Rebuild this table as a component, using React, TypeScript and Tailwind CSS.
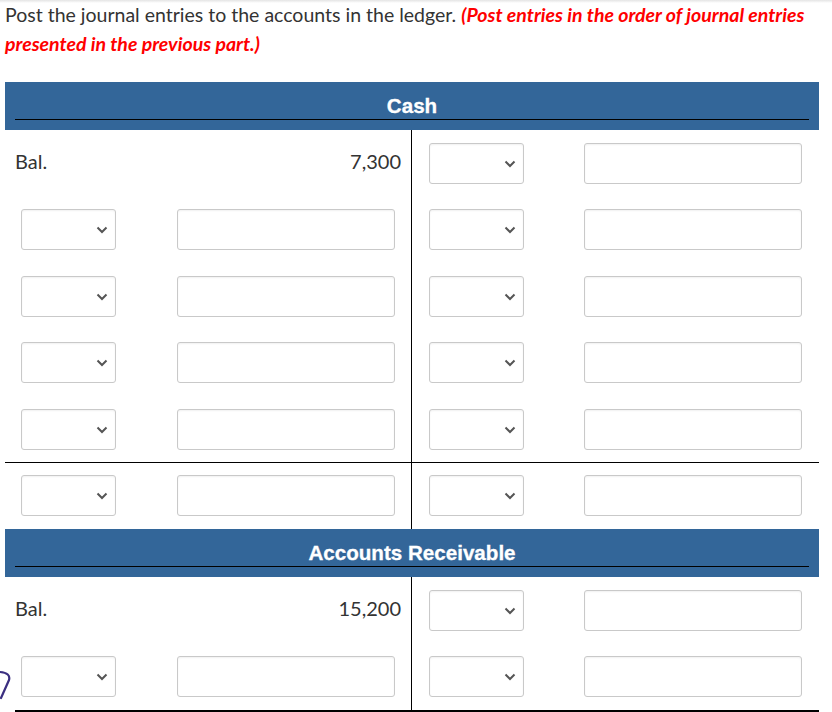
import React from 'react';

const rowHeights = ['h-[66px]', 'h-[67px]', 'h-[66px]', 'h-[67px]', 'h-[66px]'];

function Chevron() {
  return (
    <svg width="12" height="8" viewBox="0 0 12 8" className="absolute right-[7px] top-1/2 -translate-y-1/2">
      <polyline points="1.5,1.5 6,6 10.5,1.5" fill="none" stroke="#555" strokeWidth="2" />
    </svg>
  );
}

function SelectBox() {
  return (
    <div className="relative w-[95px] h-[41px] rounded-[3px] border border-[#c9c9c9] bg-white shadow-[inset_0_1px_2px_rgba(0,0,0,0.06)]">
      <Chevron />
    </div>
  );
}

function TextBox() {
  return <div className="w-[218px] h-[41px] rounded-[3px] border border-[#c9c9c9] bg-white shadow-[inset_0_1px_2px_rgba(0,0,0,0.06)]" />;
}

function EntryCell({ side }: { side: 'left' | 'right' }) {
  return (
    <div className={side === 'left' ? 'flex pl-[16px] gap-[61px]' : 'flex pl-[17px] gap-[60px]'}>
      <SelectBox />
      <TextBox />
    </div>
  );
}

function Header({ title }: { title: string }) {
  return (
    <div className="h-[48px] bg-[#336699] px-[10px]">
      <div className="h-[38px] pt-[11px] border-b border-black text-center text-white font-bold text-[20.6px] leading-[25px] font-['Liberation_Sans',Arial,sans-serif] [-webkit-text-stroke:0.3px_white]">
        {title}
      </div>
    </div>
  );
}

function BalRow({ amount, h }: { amount: string; h: string }) {
  return (
    <div className={`flex ${h}`}>
      <div className="w-[406px] flex items-start justify-between px-[10px] pt-[19px] text-[20px] leading-[24px] text-[#333]">
        <span>Bal.</span>
        <span>{amount}</span>
      </div>
      <div className="w-px bg-black" />
      <div className="flex-1 pt-[13px]">
        <EntryCell side="right" />
      </div>
    </div>
  );
}

function EntryRow({ h, pt }: { h: string; pt: string }) {
  return (
    <div className={`flex ${h}`}>
      <div className={`w-[406px] ${pt}`}>
        <EntryCell side="left" />
      </div>
      <div className="w-px bg-black" />
      <div className={`flex-1 ${pt}`}>
        <EntryCell side="right" />
      </div>
    </div>
  );
}

export default function App() {
  return (
    <div className="relative w-[832px] h-[712px] overflow-hidden bg-white font-['Lato','Open_Sans',sans-serif]">
      <div className="absolute inset-x-0 top-0 h-[3px] bg-gradient-to-b from-[#e4e4e4] to-white" />
      <div className="w-[819px] pl-[5px]">
        <p className="pt-[0px] text-[19.5px] leading-[29px] text-[#333]">
          Post the journal entries to the accounts in the ledger.{' '}
          <span className="font-bold italic text-[#ff0000]">
            (Post entries in the order of journal entries presented in the previous part.)
          </span>
        </p>

        <div className="mt-[24px]">
          <Header title="Cash" />
          <BalRow amount="7,300" h="h-[66px]" />
          {rowHeights.slice(1).map((h, i) => (
            <EntryRow key={i} h={h} pt="pt-[13px]" />
          ))}
          <div className="h-px bg-black" />
          <EntryRow h="h-[66px]" pt="pt-[12px]" />

          <Header title="Accounts Receivable" />
          <BalRow amount="15,200" h="h-[66px]" />
          <EntryRow h="h-[67px]" pt="pt-[13px]" />
          <div className="flex">
            <div className="w-[10px]" />
            <div className="flex-1 h-[2px] bg-black" />
          </div>
          <div className="flex h-[10px]">
            <div className="w-[406px]" />
            <div className="w-px bg-black" />
          </div>
        </div>
      </div>
      <svg width="14" height="34" viewBox="0 0 14 34" className="absolute left-0 top-[668px]">
        <path d="M0 4 Q11 5 9 12 L1 30" fill="none" stroke="#3b2f80" strokeWidth="2.2" strokeLinecap="round" />
      </svg>
    </div>
  );
}
